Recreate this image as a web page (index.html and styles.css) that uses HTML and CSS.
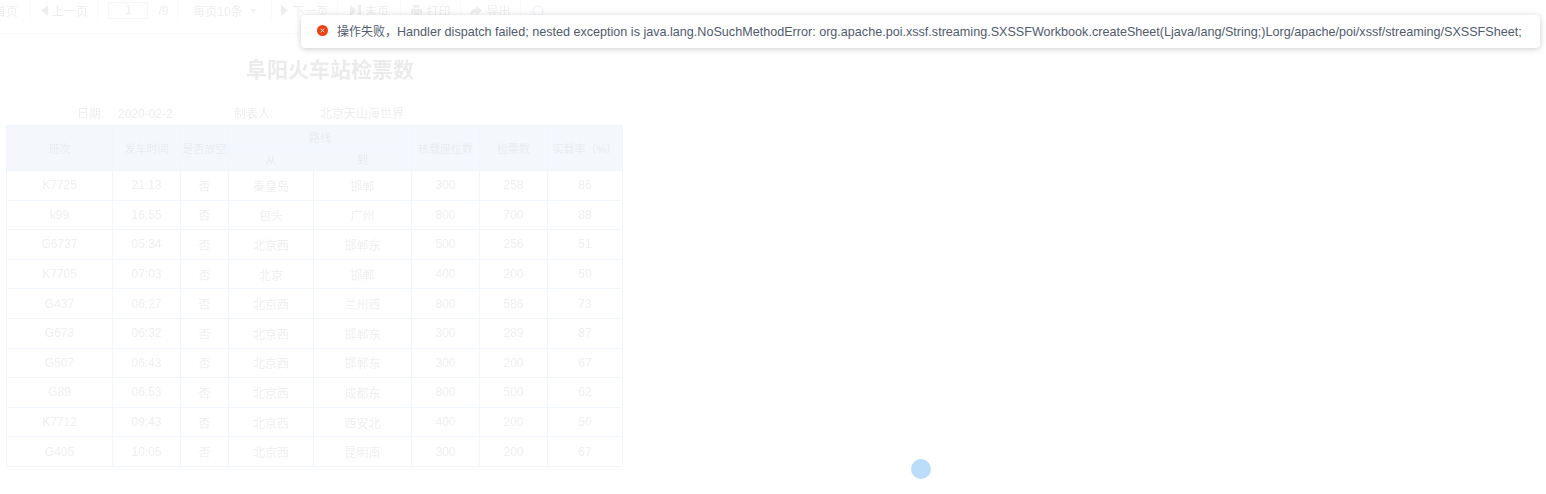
FILE: index.html
```html
<!DOCTYPE html>
<html lang="zh-CN">
<head>
    <meta charset="UTF-8">
    <meta name="viewport" content="width=device-width, initial-scale=1.0">
    <title>阜阳火车站检票数</title>
    <link rel="stylesheet" href="styles.css">
</head>
<body>
    <div class="report">
        <div class="toolbar">
            <div class="tool tool-first">首页</div>
            <div class="tool tool-prev">
                <svg class="icon" viewBox="0 0 10 12"><path d="M9 0v12L1 6z"/></svg>上一页
            </div>
            <div class="tool tool-page"><span class="page-input">1</span><span>/9</span></div>
            <div class="tool tool-size">每页10条
                <svg class="caret" viewBox="0 0 8 5"><path d="M0 0h8L4 5z"/></svg>
            </div>
            <div class="tool tool-next">
                <svg class="icon" viewBox="0 0 10 12"><path d="M1 0v12l8-6z"/></svg>下一页
            </div>
            <div class="tool tool-last">
                <svg class="icon" viewBox="0 0 14 12"><path d="M1 0v12l8-6zM10 0h3v12h-3z"/></svg>末页
            </div>
            <div class="tool tool-print">
                <svg class="icon" viewBox="0 0 14 12"><path d="M4 0h6v3H4zM1 4h12v6h-2V7H3v3H1zM4 8h6v4H4z"/></svg>打印
            </div>
            <div class="tool tool-export">
                <svg class="icon" viewBox="0 0 14 12"><path d="M1 12V8c0-3 3-4 6-4V1l6 5-6 5V8c-3 0-5 1-6 4z"/></svg>导出
            </div>
            <div class="tool tool-search">
                <svg class="search" viewBox="0 0 12 12"><circle cx="6" cy="6" r="5"/></svg>
            </div>
        </div>

        <h1 class="report-title">阜阳火车站检票数</h1>

        <div class="report-info">
            <span class="info-date-label">日期:</span>
            <span class="info-date">2020-02-2</span>
            <span class="info-author-label">制表人:</span>
            <span class="info-author">北京天山海世界</span>
        </div>

        <table class="ticket-table">
            <colgroup>
                <col class="col-train">
                <col class="col-time">
                <col class="col-empty">
                <col class="col-from">
                <col class="col-to">
                <col class="col-seats">
                <col class="col-checked">
                <col class="col-rate">
            </colgroup>
            <thead>
                <tr class="head-top">
                    <th rowspan="2">班次</th>
                    <th rowspan="2">发车时间</th>
                    <th rowspan="2">是否放空</th>
                    <th colspan="2">路线</th>
                    <th rowspan="2">核载座位数</th>
                    <th rowspan="2">检票数</th>
                    <th rowspan="2">实载率（%）</th>
                </tr>
                <tr class="head-sub">
                    <th>从</th>
                    <th>到</th>
                </tr>
            </thead>
            <tbody>
                <tr><td>K7725</td><td>21:13</td><td>否</td><td>秦皇岛</td><td>邯郸</td><td>300</td><td>258</td><td>86</td></tr>
                <tr><td>k99</td><td>16:55</td><td>否</td><td>包头</td><td>广州</td><td>800</td><td>700</td><td>88</td></tr>
                <tr><td>G6737</td><td>05:34</td><td>否</td><td>北京西</td><td>邯郸东</td><td>500</td><td>256</td><td>51</td></tr>
                <tr><td>K7705</td><td>07:03</td><td>否</td><td>北京</td><td>邯郸</td><td>400</td><td>200</td><td>50</td></tr>
                <tr><td>G437</td><td>06:27</td><td>否</td><td>北京西</td><td>兰州西</td><td>800</td><td>586</td><td>73</td></tr>
                <tr><td>G673</td><td>06:32</td><td>否</td><td>北京西</td><td>邯郸东</td><td>300</td><td>289</td><td>87</td></tr>
                <tr><td>G507</td><td>06:43</td><td>否</td><td>北京西</td><td>邯郸东</td><td>300</td><td>200</td><td>67</td></tr>
                <tr><td>G89</td><td>06:53</td><td>否</td><td>北京西</td><td>成都东</td><td>800</td><td>500</td><td>62</td></tr>
                <tr><td>K7712</td><td>09:43</td><td>否</td><td>北京西</td><td>西安北</td><td>400</td><td>200</td><td>50</td></tr>
                <tr><td>G405</td><td>10:05</td><td>否</td><td>北京西</td><td>昆明南</td><td>300</td><td>200</td><td>67</td></tr>
            </tbody>
        </table>
    </div>

    <div class="message">
        <svg class="message-icon" viewBox="0 0 12 12">
            <circle cx="6" cy="6" r="6"/>
            <path d="M4 4l4 4M8 4l-4 4"/>
        </svg>
        <span class="message-text"><span class="message-lead">操作失败，</span>Handler dispatch failed; nested exception is java.lang.NoSuchMethodError: org.apache.poi.xssf.streaming.SXSSFWorkbook.createSheet(Ljava/lang/String;)Lorg/apache/poi/xssf/streaming/SXSSFSheet;</span>
    </div>

    <div class="loading-dot"></div>
</body>
</html>
```

FILE: styles.css
```css
html, body {
    margin: 0;
    height: 100%;
    background-color: #ffffff;
    overflow: hidden;
}

body {
    font-family: "Liberation Sans", "Noto Sans CJK SC", sans-serif;
    font-size: 12px;
}

/* contenido detras de la capa de carga */
.report {
    width: 622px;
    color: #eeeeee;
    filter: blur(0.7px);
}

.toolbar {
    display: flex;
    height: 33px;
    align-items: flex-start;
    margin-left: -6px;
    margin-right: -2px;
    border-bottom: 1px solid #fafafa;
    font-size: 12px;
}

.tool {
    display: flex;
    align-items: center;
    justify-content: center;
    height: 21px;
    box-sizing: border-box;
    border-right: 1px solid #fafafa;
    white-space: nowrap;
}

.tool-first { width: 36px; justify-content: flex-start; }
.tool-prev { width: 69px; }
.tool-page { width: 80px; gap: 10px; }
.tool-size { width: 93px; gap: 7px; }
.tool-next { width: 66px; }
.tool-last { width: 63px; }
.tool-print { width: 60px; }
.tool-export { width: 60px; }
.tool-search { flex: 1; justify-content: flex-start; padding-left: 11px; border-right: none; }

.page-input {
    width: 38px;
    height: 15px;
    line-height: 15px;
    box-sizing: content-box;
    text-align: center;
    border: 1px solid #f6f6f6;
}

.icon {
    width: 9px;
    height: 11px;
    margin-right: 3px;
    fill: #eeeeee;
}

.tool-last .icon,
.tool-print .icon,
.tool-export .icon {
    width: 13px;
}

.caret {
    width: 7px;
    height: 4px;
    fill: #f1f1f1;
}

.search {
    width: 12px;
    height: 12px;
    fill: none;
    stroke: #eaeff7;
}

.report-title {
    margin: 18px 0 0;
    width: 660px;
    height: 35px;
    line-height: 35px;
    text-align: center;
    font-size: 21px;
    font-weight: bold;
    color: #ebebeb;
}

.report-info {
    display: flex;
    height: 16px;
    line-height: 16px;
    margin-top: 19px;
    margin-bottom: 3px;
    padding-left: 77px;
    white-space: nowrap;
}

.info-date-label { width: 41px; }
.info-date { width: 116px; }
.info-author-label { width: 86px; }

.ticket-table {
    table-layout: fixed;
    border-collapse: collapse;
    width: 616px;
    margin-left: 6px;
    color: #efefef;
    font-size: 12px;
}

.col-train { width: 106px; }
.col-time { width: 68px; }
.col-empty { width: 48px; }
.col-from { width: 85px; }
.col-to { width: 98px; }
.col-seats { width: 68px; }
.col-checked { width: 68px; }
.col-rate { width: 75px; }

.ticket-table th,
.ticket-table td {
    border: 1px solid #f1f6fd;
    padding: 0;
    text-align: center;
    font-weight: normal;
    white-space: nowrap;
}

.ticket-table th {
    background-color: #f4f8fd;
    color: #e9ebee;
    font-size: 11px;
}

.head-top { height: 22px; }
.head-sub { height: 23px; }

.ticket-table td {
    height: 28.6px;
}

.message {
    position: absolute;
    top: 15px;
    left: 301px;
    display: flex;
    align-items: center;
    gap: 9px;
    box-sizing: border-box;
    width: 1239px;
    height: 33px;
    padding-left: 16px;
    padding-bottom: 2px;
    background-color: #ffffff;
    border-radius: 4px;
    box-shadow: 0 1px 6px rgba(0, 0, 0, 0.2);
    color: #515a6e;
    white-space: nowrap;
}

.message-text {
    font-size: 12.6px;
}

.message-lead {
    font-size: 12px;
}

.message-icon {
    flex: none;
    width: 11px;
    height: 11px;
    fill: #ed4014;
    stroke: none;
}

.message-icon path {
    fill: none;
    stroke: #ffffff;
    stroke-width: 1;
}

.loading-dot {
    position: absolute;
    left: 911px;
    top: 459px;
    width: 20px;
    height: 20px;
    border-radius: 50%;
    background-color: #bbdcfb;
}
```
